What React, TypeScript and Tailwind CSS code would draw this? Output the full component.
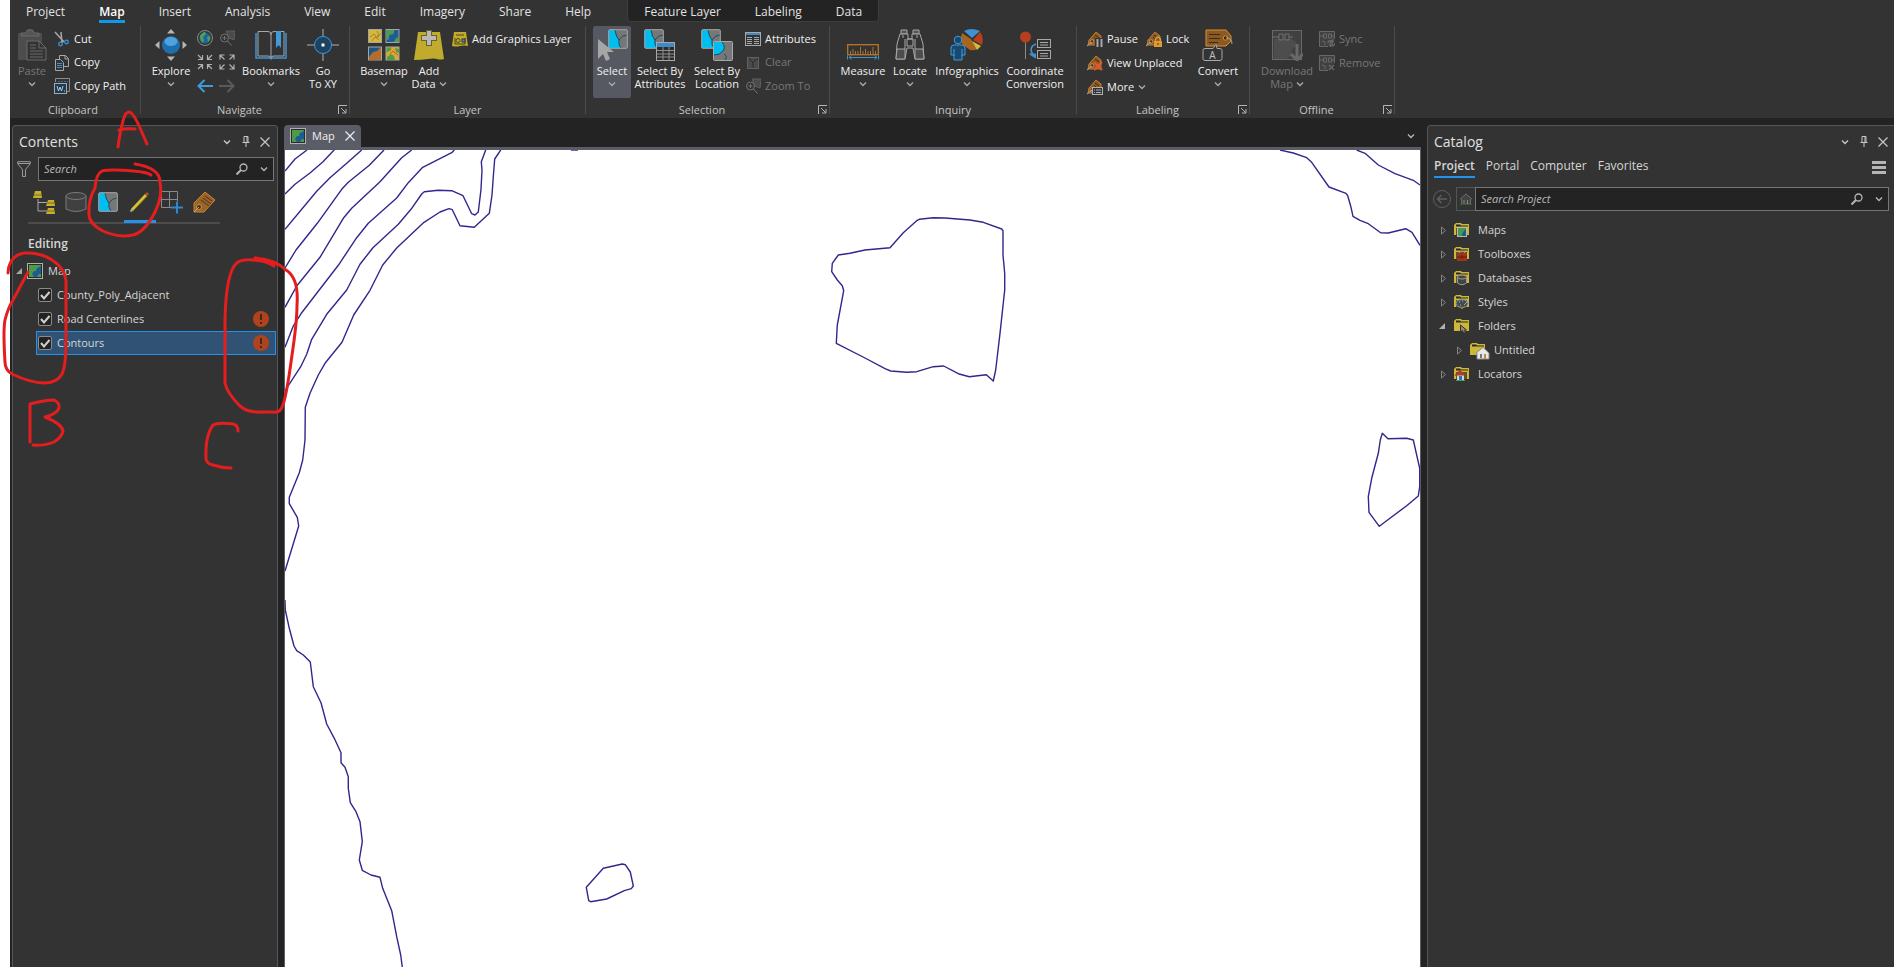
import { ReactNode, useState } from 'react';
import { clsx } from 'clsx';

const Chevron = ({ className }: { className?: string }) => (
  <svg viewBox="0 0 8 6" className={clsx('w-2 h-[6px] shrink-0', className)}>
    <path d="M1 1.5 4 4.5 7 1.5" fill="none" stroke="currentColor" strokeWidth="1.4" />
  </svg>
);

const Big = ({ children }: { children: ReactNode }) => (
  <svg viewBox="0 0 32 32" className="size-8 shrink-0" fill="none">
    {children}
  </svg>
);

const Small = ({ children }: { children: ReactNode }) => (
  <svg viewBox="0 0 16 16" className="size-4 shrink-0" fill="none">
    {children}
  </svg>
);

/* ---------- ribbon icons, 32px ---------- */

const PasteIcon = () => (
  <Big>
    <rect x="2" y="4" width="24" height="27" rx="1" fill="#4d4d4d" />
    <path d="M5 4h5a4 3.5 0 0 1 8 0h5v3H5z" fill="#555" stroke="#6b6b6b" />
    <path d="M11 12h12l7 7v12H11z" fill="#333" stroke="#6b6b6b" />
    <path d="M23 12v7h7M14 16h6M14 19h6M14 22h13M14 25h13M14 28h13" stroke="#6b6b6b" />
  </Big>
);

const ExploreIcon = () => (
  <Big>
    <path d="M16 0l4 4.500h-8zM16 32l4-4.500h-8zM0 16l4.500-4v8zM32 16l-4.500-4v8z" fill="#b5b5b5" />
    <circle cx="16" cy="16" r="9" fill="#1f6fae" />
    <ellipse cx="16" cy="12.5" rx="6.5" ry="4.5" fill="#4fa3dc" />
  </Big>
);

const BookmarksIcon = () => (
  <Big>
    <path d="M1 4v25h13q2 0 2 1.500Q16 29 18 29h13V4" stroke="#3f92d2" strokeWidth="1.5" />
    <path
      d="M3 2.500h10q3 0 3 3 0-3 3-3h10V27H19q-3 0-3 2 0-2-3-2H3zM16 5v23"
      stroke="#a8a8a8"
    />
    <path d="M21 2h5v17l-2.500-3-2.500 3z" fill="#3f9bdc" />
  </Big>
);

const GoToIcon = () => (
  <Big>
    <path d="M16 0v7M16 25v7M0 16h7M25 16h7" stroke="#b0b0b0" />
    <circle cx="16" cy="16" r="8.5" fill="#1d4361" stroke="#3b9ae0" />
    <path d="M14.500 14.500h3v3h-3z" fill="#fff" />
  </Big>
);

const BasemapIcon = () => (
  <Big>
    <rect x=".5" y=".5" width="13" height="13" fill="#d3b83b" stroke="#a5a5a5" />
    <path d="M2 8l4-3 3 4 4-5M4 12l3-4 4 3M9 2l2 4" stroke="#c27a2a" />
    <rect x="9" y="6" width="2" height="2" fill="#58a94c" />
    <rect x="18" y=".5" width="13" height="13" fill="#1d5c94" stroke="#a5a5a5" />
    <path d="M18.500 1h8l-1 4-4 1-1 5-2-1zM31 8v5h-5l2-4z" fill="#4d9a52" />
    <rect x=".5" y="18" width="13" height="13" fill="#1d5680" stroke="#a5a5a5" />
    <path d="M1 28l4-5 4-1 4-4v13H1z" fill="#b36d31" />
    <rect x="18" y="18" width="13" height="13" fill="#dba730" stroke="#a5a5a5" />
    <path d="M18.500 18.500h5l-1 3-4 2zM27 19l4 1v4l-3-1zM19 28l4-3 3 2 1 4h-8z" fill="#4f9d46" />
    <path d="M22 25l3-3 2 2 3 2" stroke="#cb5a2c" />
  </Big>
);

const AddDataIcon = () => (
  <Big>
    <path d="M5 3h22l4 27q-4 1-7 0t-9 0-14 1z" fill="#c1ab2d" />
    <path d="M16 1v16M8 9h16" stroke="#6b6223" strokeWidth="6" />
    <path d="M16 2v14M9 9h14" stroke="#b9b9b9" strokeWidth="4" />
  </Big>
);

const LayerTile = ({ x, y, s = 20 }: { x: number; y: number; s?: number }) => (
  <svg x={x} y={y} width={s} height={s} viewBox="0 0 20 20">
    <rect x=".7" y=".7" width="18.6" height="18.6" rx="1" fill="#777" />
    <path d="M1 1h6q1 7 4 10-1 5 2 8H1z" fill="#00bff0" />
    <path d="M7 1q1 7 4 10-1 5 2 8M11 11q3-5 8-5" stroke="#174f60" fill="none" />
    <rect x=".7" y=".7" width="18.6" height="18.6" rx="1" stroke="#a8a8a8" fill="none" />
  </svg>
);

const SelectIcon = () => (
  <Big>
    <LayerTile x={12} y={0} />
    <path d="M2 10v20l5-5 3 7 4-2-3-7h7z" fill="#a6a6a6" />
  </Big>
);

const SelectAttributesIcon = () => (
  <Big>
    <LayerTile x={0} y={0} />
    <rect x="12.5" y="13.5" width="18" height="18" fill="#2c2c2c" stroke="#a8a8a8" />
    <path d="M13 14h17v4H13z" fill="#3a8bc6" />
    <path d="M13 21.500h17M13 25h17M13 28h17M19 18v13M25 18v13" stroke="#8f8f8f" />
  </Big>
);

const SelectLocationIcon = () => (
  <Big>
    <LayerTile x={0} y={0} />
    <rect x="12.5" y="12.5" width="19" height="19" rx="1" fill="#777" stroke="#a8a8a8" />
    <path d="M13 13h8q4 5 1 9-3 4-9 4z" fill="#00bff0" />
    <path d="M21 13q4 5 1 9-3 4-9 4M23 25q4 2 1 6" stroke="#174f60" />
  </Big>
);

const MeasureIcon = () => (
  <Big>
    <rect x=".7" y="15.7" width="30.6" height="10" stroke="#b0722b" strokeWidth="1.4" />
    <path
      d="M3.500 25v-3M6 25v-5M8.500 25v-3M11 25v-3M13.500 25v-7M16 25v-3M18.500 25v-5M21 25v-3M23.500 25v-3M26 25v-7M28.500 25v-3"
      stroke="#b0722b"
    />
    <path
      d="M.5 26.500v4M31.500 26.500v4M2 28.500h28M4.500 26.500l-2.500 2 2.500 2M27.500 26.500l2.500 2-2.500 2"
      stroke="#3f92d2"
    />
  </Big>
);

const LocateIcon = () => (
  <Big>
    <path d="M7 1h6v4H7zM19 1h6v4h-6z" fill="#555" stroke="#a8a8a8" />
    <path d="M6 5h8v5h4V5h8l3 10 1 15h-9l-2-11h-6l-2 11H2l1-15z" fill="#333" stroke="#a8a8a8" />
    <path d="M3 20h8v10H2zM21 20h8l1 10h-9z" fill="#4d4d4d" stroke="#a8a8a8" />
    <path d="M13 10h6v7h-6zM9 6v3M23 6v3M11 10v10M21 10v10" stroke="#a8a8a8" />
  </Big>
);

const InfographicsIcon = () => (
  <svg viewBox="0 0 34 32" className="w-[34px] h-8 shrink-0" fill="none">
    <path d="M21 10L12 4q-2 6 0 11l8 6q4 1 7-1z" fill="#a8651f" />
    <path d="M22 9l-8-7q7-4 16 0z" fill="#3f92d2" />
    <path d="M23 11l7-8q4 5 2 13z" fill="#b5401f" />
    <path d="M22 12l9 5-4 4z" fill="#d2bd35" />
    <circle cx="8" cy="11" r="3.8" fill="#184a70" stroke="#3f9bdc" />
    <path d="M4 16h8q3 0 3 3v7h-3v5H4v-5H1v-7q0-3 3-3z" fill="#184a70" stroke="#3f9bdc" />
    <path d="M4 20v7M12 20v7" stroke="#3f9bdc" />
  </svg>
);

const CoordinateIcon = () => (
  <Big>
    <path d="M6.500 8v22" stroke="#8b8b8b" />
    <circle cx="6.5" cy="8" r="5.5" fill="#b5401f" />
    <rect x="18.5" y="10.5" width="13" height="8" stroke="#a8a8a8" />
    <rect x="18.5" y="21.5" width="13" height="8" stroke="#a8a8a8" />
    <path d="M21 13.500h8M21 16h8M21 24.500h8M21 27h8" stroke="#a8a8a8" />
    <path d="M17 15q-8 3-3 11" stroke="#3f92d2" strokeWidth="1.5" />
    <path d="M10.500 25h6v4z" fill="#3f92d2" stroke="#3f92d2" />
  </Big>
);

const ConvertIcon = () => (
  <Big>
    <path d="M4 1h20l5 6v5l-5 5H4z" fill="#8b5a22" stroke="#d98f35" />
    <path d="M7 5.500h11M7 9.500h11M7 13.500h9" stroke="#3a2a18" />
    <circle cx="23.5" cy="9" r="2.2" fill="#3a2a18" stroke="#d98f35" />
    <path d="M24 9q6 0 6 6" stroke="#a8a8a8" />
    <path
      d="M3 19.500h8l3-4 1 4h3q2 0 2 2v8q0 2-2 2H3q-2 0-2-2v-8q0-2 2-2z"
      fill="#333"
      stroke="#a8a8a8"
    />
    <text x="10.5" y="29.5" textAnchor="middle" fontSize="10" fill="#c4c4c4">
      A
    </text>
  </Big>
);

const DownloadMapIcon = () => (
  <Big>
    <rect x="1.5" y="1.5" width="29" height="29" fill="#404040" stroke="#686868" />
    <path d="M3 10h18l4 3v4l-4 3-1 7-5 3H3z" fill="#4d4d4d" />
    <path d="M1 8h7M8 5v6h4V5zM14 5v6h4V5zM18 8h4" stroke="#707070" />
    <path d="M26 15v14M20 25l6 6 6-6" stroke="#686868" strokeWidth="3" />
  </Big>
);

/* ---------- ribbon icons, 16px ---------- */

const CutIcon = () => (
  <Small>
    <path d="M1 1l9 10M7 1l1 11" stroke="#a8a8a8" strokeWidth="1.5" />
    <circle cx="6.5" cy="13" r="1.8" stroke="#3f92d2" strokeWidth="1.3" />
    <circle cx="12.5" cy="11" r="1.8" stroke="#3f92d2" strokeWidth="1.3" />
  </Small>
);

const CopyIcon = () => (
  <Small>
    <path d="M5.500.5h6l3 3v8h-9z" fill="#333" stroke="#a8a8a8" />
    <path d="M11 1v3h3" stroke="#a8a8a8" />
    <path d="M1.500 4.500h5l3 3v8h-8z" fill="#333" stroke="#a8a8a8" />
    <path d="M3 8.500h5M3 10.500h5M3 12.500h5" stroke="#3f92d2" />
  </Small>
);

const CopyPathIcon = () => (
  <Small>
    <path d="M1.500 4V.5h14v13H13" stroke="#8b8b8b" />
    <path d="M4 3.500h10" stroke="#2c6ea3" strokeDasharray="2 1" />
    <rect x=".5" y="5.500" width="12" height="10" fill="#173d5a" stroke="#a8a8a8" />
    <path d="M3 8l1.500 5L6 9l1.500 4L9 8M10 13h1" stroke="#c4c4c4" />
  </Small>
);

const GlobeIcon = () => (
  <Small>
    <circle cx="8" cy="8" r="7.5" stroke="#8b8b8b" />
    <circle cx="8" cy="8" r="5.600" fill="#1e639e" />
    <path d="M3 6q2-4 5-4l1 2-3 3 1 3-1 3q-3-2-3-7zM10 7l3-1q1 4-2 6z" fill="#4f9f58" />
  </Small>
);

const ZoomSelectionIcon = () => (
  <Small>
    <path d="M7 1h9l-1 9-5-2z" fill="#4b4b4b" stroke="#5f5f5f" />
    <circle cx="5.5" cy="8" r="4" fill="#333" stroke="#727272" />
    <path d="M8.500 11l4 4.500M3.500 8h4M5.500 6v4" stroke="#727272" />
  </Small>
);

const ShrinkIcon = () => (
  <Small>
    <path
      d="M1 1l4 4M5.500 1v4.500H1M15 1l-4 4M10.500 1v4.500H15M1 15l4-4M5.500 15v-4.500H1M15 15l-4-4M10.500 15v-4.500H15"
      stroke="#b0b0b0"
      strokeWidth="1.2"
    />
  </Small>
);

const GrowIcon = () => (
  <Small>
    <path
      d="M1 1l4.500 4.500M1 5.500V1h4.500M15 1l-4.500 4.500M15 5.500V1h-4.500M1 15l4.500-4.500M1 10.500V15h4.500M15 15l-4.500-4.500M15 10.500V15h-4.500"
      stroke="#b0b0b0"
      strokeWidth="1.2"
    />
  </Small>
);

const ArrowIcon = ({ forward }: { forward?: boolean }) => (
  <Small>
    <path
      d={forward ? 'M0 8h14M8.500 2l6 6-6 6' : 'M16 8H2M7.500 2l-6 6 6 6'}
      stroke={forward ? '#5a5a5a' : '#3f9bdc'}
      strokeWidth="2"
    />
  </Small>
);

const GraphicsLayerIcon = () => (
  <Small>
    <path d="M2 1h12l2 14q-4-1-8 0t-8 0z" fill="#c1ab2d" />
    <path d="M4 4h8M3 7v6h10V7" stroke="#4d451c" />
    <circle cx="6" cy="9.5" r="2" stroke="#4d451c" />
    <rect x="10" y="8" width="3" height="3" fill="#3f92d2" stroke="#333" />
  </Small>
);

const TableIcon = () => (
  <Small>
    <rect x=".5" y="1.5" width="15" height="13" stroke="#a8a8a8" />
    <path d="M1 2h14v2H1z" fill="#3a8bc6" />
    <path
      d="M2 6.500h5M2 8.500h5M2 10.500h5M2 12.500h5M9 6.500h5M9 8.500h5M9 10.500h5M9 12.500h5"
      stroke="#a8a8a8"
    />
  </Small>
);

const ClearIcon = () => (
  <Small>
    <rect x="2.5" y="2.5" width="11" height="11" fill="#4b4b4b" stroke="#616161" />
    <path d="M4 3l4 5v5M8 8q2-4 5-4" stroke="#2c2c2c" />
  </Small>
);

const TagIcon = ({ badge }: { badge: 'pause' | 'lock' | 'unplaced' | 'more' }) => (
  <Small>
    <path d="M2 9L9 1l5 4v9H1z" fill="#8f5c24" stroke="#c07e30" />
    <circle cx="5" cy="10.5" r="1.8" fill="#333" stroke="#d98f35" />
    <path d="M8 4l4 3M7 6l3 3" stroke="#3a2a18" />
    <path d="M0 15l5-4" stroke="#a8a8a8" />
    {badge === 'pause' && (
      <>
        <path d="M8 7h8v9H8z" fill="#333" />
        <path d="M10.500 8v8M14.500 8v8" stroke="#a8a8a8" strokeWidth="2" />
      </>
    )}
    {badge === 'lock' && (
      <>
        <path d="M9.500 10V8q2.500-4 5 0v2" stroke="#d9a040" strokeWidth="1.3" />
        <path d="M8 10h8v6H8z" fill="#e09a33" />
        <path d="M12 12v2" stroke="#333" />
      </>
    )}
    {badge === 'unplaced' && <path d="M7 7l8 8M15 7l-8 8" stroke="#e8562c" strokeWidth="2" />}
    {badge === 'more' && (
      <>
        <rect x="5.5" y="8.5" width="10" height="7" fill="#333" stroke="#b0b0b0" />
        <path d="M7 11h1M7 13.500h1M9 11h5M9 13.500h5" stroke="#b0b0b0" />
      </>
    )}
  </Small>
);

const OfflineIcon = ({ remove }: { remove?: boolean }) => (
  <Small>
    <path d="M15.500 8V.5H.5v15H9" fill="#414141" stroke="#686868" />
    <path d="M0 5h4M4.500 3v4h3V3zM9.500 3v4h3V3zM12 5h3M3 10l3 1v3" stroke="#686868" />
    <path
      d={remove ? 'M10 10l5 5M15 10l-5 5' : 'M9 12q0-3 5-2M14 8v3h-3M16 12q0 3-5 3M11 16v-3h3'}
      stroke="#686868"
      strokeWidth="1.4"
    />
  </Small>
);

/* ---------- pane icons ---------- */

const MapIcon = () => (
  <Small>
    <rect x=".5" y=".5" width="15" height="15" fill="#1d5c94" stroke="#b0b0b0" />
    <path d="M2 2h12v1l-4 2-1 3H7l-2 3 2 3H2zM12 11h2v3h-4z" fill="#4d9a48" />
    <rect x="1.5" y="1.5" width="13" height="13" stroke="#2b2b2b" />
  </Small>
);

const SearchIcon = () => (
  <svg viewBox="0 0 12 12" className="size-3 shrink-0" fill="none">
    <circle cx="7.5" cy="4.5" r="3.5" stroke="#b5b5b5" strokeWidth="1.3" />
    <path d="M5 7L.5 11.500" stroke="#b5b5b5" strokeWidth="2" />
  </svg>
);

const FolderBadge = ({ kind }: { kind: string }) => {
  switch (kind) {
    case 'Maps':
      return (
        <>
          <rect x="3.5" y="5.5" width="9" height="9" fill="#4a9a4c" stroke="#b8b8b8" />
          <path d="M8 14q0-4 4-7v7z" fill="#1d5c94" />
        </>
      );
    case 'Toolboxes':
      return (
        <>
          <path d="M5.500 8V5.500h5V8" stroke="#9a9a9a" />
          <path d="M3 7h10v8H3z" fill="#a33216" />
          <path d="M3 11h10M8 9v4" stroke="#5c2315" />
        </>
      );
    case 'Databases':
      return (
        <>
          <path d="M3.500 7v6q4.500 3.500 9 0V7" fill="#444" stroke="#9b9b9b" />
          <ellipse cx="8" cy="7" rx="4.5" ry="2" fill="#444" stroke="#9b9b9b" />
        </>
      );
    case 'Styles':
      return (
        <>
          <ellipse cx="8" cy="9.5" rx="6" ry="4" fill="#4a4a4a" stroke="#8f9da5" />
          <path d="M5 8h1M8 7h1" stroke="#3f92d2" strokeWidth="2" />
          <path d="M6 11h1" stroke="#4a9a4c" strokeWidth="2" />
          <path d="M10 11l5-5" stroke="#a8a8a8" />
          <path d="M8 13v2" stroke="#c06a2c" strokeWidth="2" />
        </>
      );
    case 'Folders':
      return <path d="M6.500 7v7l2-1.500 1 2.500h2l-1-3h2z" fill="#8b8b8b" stroke="#333" />;
    case 'Locators':
      return (
        <>
          <path d="M3 9h7v5H3z" fill="#cfd6d9" />
          <path d="M0 9.500L6 4l6 5.500z" fill="#b8391b" />
          <path d="M5 10h3v4H5z" fill="#2a76b2" />
          <path d="M2 14.500h9" stroke="#44a04b" />
        </>
      );
    default:
      return (
        <>
          <path d="M6 11l7-5.500 6 5.500v6H7v-6z" fill="#e8e8e8" stroke="#8b8b8b" />
          <path d="M10 12h2v4h-2z" fill="#777" />
          <path d="M14 12h2v5h-2z" fill="#c98a45" />
        </>
      );
  }
};

const FolderIcon = ({ kind }: { kind: string }) => (
  <svg viewBox="0 0 16 16" className="size-4 shrink-0 overflow-visible" fill="none">
    <path d="M0 3L2 1h5l1 1h7v11H0z" fill="#cdb736" />
    <path d="M2 2.500h4l1 1h7v1H2z" fill="#2b2b2b" />
    {!['Folders', 'Untitled'].includes(kind) && (
      <path d="M2 6h11v8H2z" fill="#333" opacity=".75" />
    )}
    <FolderBadge kind={kind} />
  </svg>
);

const WarningIcon = () => (
  <Small>
    <circle cx="8" cy="8" r="8" fill="#b0421d" />
    <path d="M8 3v6M8 11v2" stroke="#3a2a24" strokeWidth="2" />
  </Small>
);

const CloseGlyph = () => (
  <svg viewBox="0 0 10 10" className="size-[10px]" fill="none" stroke="currentColor">
    <path d="M.5.5l9 9M9.500.5l-9 9" strokeWidth="1.2" />
  </svg>
);

const PaneControls = () => (
  <div className="flex items-center gap-[3px] text-[#c8c8c8]">
    <button aria-label="Pane menu" className="w-4 flex justify-center">
      <Chevron />
    </button>
    <button aria-label="Pin pane" className="w-4 flex justify-center">
      <svg viewBox="0 0 8 11" className="w-2 h-[11px]" fill="none" stroke="currentColor">
        <path d="M2 6V.5h4V6M.5 6.500h7M4 7v4M5 1v5" />
      </svg>
    </button>
    <button aria-label="Close pane" className="w-4 flex justify-center">
      <CloseGlyph />
    </button>
  </div>
);

/* ---------- ribbon ---------- */

const LargeButton = ({
  icon,
  lines,
  menu,
  active,
  disabled,
  className,
}: {
  icon: ReactNode;
  lines: string[];
  menu?: boolean;
  active?: boolean;
  disabled?: boolean;
  className: string;
}) => (
  <button
    disabled={disabled}
    className={clsx(
      'flex flex-col items-center h-[72px] pt-[3px] shrink-0 rounded-xs',
      active && 'bg-[#565962]',
      disabled ? 'text-[#777]' : 'text-[#f0f0f0]',
      className
    )}
  >
    {icon}
    <span className="mt-[3px] leading-[13px] whitespace-nowrap">{lines[0]}</span>
    {lines[1] ? (
      <span className="flex items-center gap-[3px] leading-[13px] whitespace-nowrap">
        {lines[1]}
        {menu && <Chevron className="text-[#a8a8a8]" />}
      </span>
    ) : (
      menu && <Chevron className="mt-1 text-[#a8a8a8]" />
    )}
  </button>
);

const SmallButton = ({
  icon,
  label,
  menu,
  disabled,
}: {
  icon: ReactNode;
  label: string;
  menu?: boolean;
  disabled?: boolean;
}) => (
  <button
    disabled={disabled}
    className={clsx(
      'flex items-center gap-1 h-6 whitespace-nowrap',
      disabled ? 'text-[#777]' : 'text-[#f0f0f0]'
    )}
  >
    {icon}
    <span>{label}</span>
    {menu && <Chevron className="text-[#a8a8a8]" />}
  </button>
);

const Column = ({ children }: { children: ReactNode }) => (
  <div className="flex flex-col items-start pt-px">{children}</div>
);

const Group = ({
  title,
  launcher,
  className,
  children,
}: {
  title: string;
  launcher?: boolean;
  className: string;
  children: ReactNode;
}) => (
  <section className={clsx('shrink-0 border-r border-[#4b4b4b]', className)}>
    <div className="flex h-[72px]">{children}</div>
    <div className="flex items-end h-4">
      <h2 className="flex-1 h-4 leading-6 text-center text-[#c4c4c4]">{title}</h2>
      {launcher && (
        <button aria-label={`${title} options`} className="size-[9px] mr-[2px]">
          <svg viewBox="0 0 9 9" className="size-[9px]" fill="none" stroke="#b5b5b5">
            <path d="M.5 9V.5H9M3 3l4.500 4.500M8 4v4H4" />
          </svg>
        </button>
      )}
    </div>
  </section>
);

const TABS = ['Project', 'Map', 'Insert', 'Analysis', 'View', 'Edit', 'Imagery', 'Share', 'Help'];
const CONTEXT_TABS = ['Feature Layer', 'Labeling', 'Data'];

const RibbonTabs = () => {
  const [tab, setTab] = useState('Map');

  const renderTab = (name: string) => (
    <button
      key={name}
      onClick={() => setTab(name)}
      className={clsx(
        'h-[23px] pt-[3px] leading-[17px] text-xs border-b-[3px] whitespace-nowrap',
        tab === name ? 'border-[#0c99ee] font-semibold text-white' : 'border-transparent'
      )}
    >
      {name}
    </button>
  );

  return (
    <nav className="flex items-start h-[26px] pl-4 text-[#e2e2e2]">
      <div className="flex gap-[34px]">{TABS.map(renderTab)}</div>
      <div className="flex gap-[34px] h-[22px] ml-9 px-4 rounded-b-sm bg-[#232323] border-x border-b border-[#3d3d3d]">
        {CONTEXT_TABS.map(renderTab)}
      </div>
    </nav>
  );
};

const Ribbon = () => (
  <header className="h-[118px] shrink-0 bg-[#333] text-[11px] overflow-hidden">
    <RibbonTabs />
    <div className="flex h-[88px]">
      <Group title="Clipboard" className="w-[131px] pl-2 pr-3">
        <LargeButton icon={<PasteIcon />} lines={['Paste']} menu disabled className="w-7 mr-2" />
        <Column>
          <SmallButton icon={<CutIcon />} label="Cut" />
          <SmallButton icon={<CopyIcon />} label="Copy" />
          <SmallButton icon={<CopyPathIcon />} label="Copy Path" />
        </Column>
      </Group>

      <Group title="Navigate" launcher className="w-[209px]">
        <LargeButton icon={<ExploreIcon />} lines={['Explore']} menu className="w-[46px] ml-[7px]" />
        <div className="grid grid-cols-2 gap-x-[6px] gap-y-2 h-[64px] mt-1 ml-[3px] mr-1">
          <button aria-label="Full extent">
            <GlobeIcon />
          </button>
          <button aria-label="Zoom to selection" disabled>
            <ZoomSelectionIcon />
          </button>
          <button aria-label="Fixed zoom in">
            <ShrinkIcon />
          </button>
          <button aria-label="Fixed zoom out">
            <GrowIcon />
          </button>
          <button aria-label="Previous extent">
            <ArrowIcon />
          </button>
          <button aria-label="Next extent" disabled>
            <ArrowIcon forward />
          </button>
        </div>
        <LargeButton icon={<BookmarksIcon />} lines={['Bookmarks']} menu className="w-[64px]" />
        <LargeButton icon={<GoToIcon />} lines={['Go', 'To XY']} className="w-10" />
      </Group>

      <Group title="Layer" className="w-[236px]">
        <LargeButton icon={<BasemapIcon />} lines={['Basemap']} menu className="w-[50px] ml-[9px]" />
        <LargeButton icon={<AddDataIcon />} lines={['Add', 'Data']} menu className="w-10 mr-[3px]" />
        <Column>
          <SmallButton icon={<GraphicsLayerIcon />} label="Add Graphics Layer" />
        </Column>
      </Group>

      <Group title="Selection" launcher className="w-[244px]">
        <LargeButton
          icon={<SelectIcon />}
          lines={['Select']}
          menu
          active
          className="w-[38px] ml-[7px]"
        />
        <LargeButton
          icon={<SelectAttributesIcon />}
          lines={['Select By', 'Attributes']}
          className="w-[58px]"
        />
        <LargeButton
          icon={<SelectLocationIcon />}
          lines={['Select By', 'Location']}
          className="w-[56px]"
        />
        <Column>
          <SmallButton icon={<TableIcon />} label="Attributes" />
          <SmallButton icon={<ClearIcon />} label="Clear" disabled />
          <SmallButton icon={<ZoomSelectionIcon />} label="Zoom To" disabled />
        </Column>
      </Group>

      <Group title="Inquiry" className="w-[247px]">
        <LargeButton icon={<MeasureIcon />} lines={['Measure']} menu className="w-[50px] ml-2" />
        <LargeButton icon={<LocateIcon />} lines={['Locate']} menu className="w-11" />
        <LargeButton icon={<InfographicsIcon />} lines={['Infographics']} menu className="w-[70px]" />
        <LargeButton
          icon={<CoordinateIcon />}
          lines={['Coordinate', 'Conversion']}
          className="w-[66px]"
        />
      </Group>

      <Group title="Labeling" launcher className="w-[173px]">
        <div className="ml-[10px]">
          <Column>
            <div className="flex gap-2">
              <SmallButton icon={<TagIcon badge="pause" />} label="Pause" />
              <SmallButton icon={<TagIcon badge="lock" />} label="Lock" />
            </div>
            <SmallButton icon={<TagIcon badge="unplaced" />} label="View Unplaced" />
            <SmallButton icon={<TagIcon badge="more" />} label="More" menu />
          </Column>
        </div>
        <LargeButton
          icon={<ConvertIcon />}
          lines={['Convert']}
          menu
          className="w-[46px] ml-auto mr-2"
        />
      </Group>

      <Group title="Offline" launcher className="w-[145px]">
        <LargeButton
          icon={<DownloadMapIcon />}
          lines={['Download', 'Map']}
          menu
          disabled
          className="w-[56px] ml-[9px] mr-1"
        />
        <Column>
          <SmallButton icon={<OfflineIcon />} label="Sync" disabled />
          <SmallButton icon={<OfflineIcon remove />} label="Remove" disabled />
        </Column>
      </Group>
    </div>
  </header>
);

/* ---------- contents pane ---------- */

const VIEWS = [
  {
    name: 'Drawing order',
    icon: (
      <>
        <path d="M5 8v12h9M5 11.500h9" stroke="#a8a8a8" />
        <path d="M2 0h6l1 7H0zM15 9h6l1 6h-9zM15 17h6l1 6h-9z" fill="#c9b02c" />
        <path d="M1 4h8M14 12h8M14 20h8" stroke="#7a6c22" />
      </>
    ),
  },
  {
    name: 'Data source',
    icon: (
      <>
        <path d="M1 5v13q10 5 20 0V5" fill="#404040" stroke="#7a7a7a" />
        <ellipse cx="11" cy="5" rx="10" ry="3.5" fill="#404040" stroke="#7a7a7a" />
      </>
    ),
  },
  { name: 'Selection', icon: <LayerTile x={1} y={1} /> },
  {
    name: 'Editing',
    icon: (
      <>
        <path d="M3 19L17 4" stroke="#d8c22f" strokeWidth="3" />
        <path d="M4.500 19.500L18 5.500" stroke="#6d6220" />
        <path d="M17 4l2-2" stroke="#b5502b" strokeWidth="3" />
        <path d="M1.500 20.500l2-2" stroke="#a8a8a8" strokeWidth="2" />
      </>
    ),
  },
  {
    name: 'Snapping',
    icon: (
      <>
        <path d="M.5.5h16v16H.5zM8.500 0v17M0 8.500h17" stroke="#8b8b8b" />
        <path d="M16 10v12M10 16h12" stroke="#333" strokeWidth="4" />
        <path d="M16 10.500v12M10 16.500h12" stroke="#2f87cf" strokeWidth="2" />
      </>
    ),
  },
  {
    name: 'Labeling',
    icon: (
      <>
        <path d="M1 12L12 1l10 8-11 12H1z" fill="#9a6428" stroke="#c98433" />
        <circle cx="6" cy="16" r="2.5" fill="#333" stroke="#d98f35" />
        <path d="M8 9l8 6M10 7l8 6M12 5l7 5" stroke="#4b331a" />
        <path d="M1 21l5-5" stroke="#a8a8a8" />
      </>
    ),
  },
];

const LAYERS = [
  { name: 'County_Poly_Adjacent', warning: false },
  { name: 'Road Centerlines', warning: true },
  { name: 'Contours', warning: true },
];

const ContentsPane = () => {
  const [view, setView] = useState('Editing');
  const [selected, setSelected] = useState('Contours');

  return (
    <aside className="w-[266px] shrink-0 bg-[#333] border border-b-0 border-[#54565e] rounded-t-sm text-[#d6d6d6]">
      <div className="flex items-center justify-between h-[31px] pl-[6px] pr-1">
        <h2 className="text-sm text-[#e0e0e0]">Contents</h2>
        <PaneControls />
      </div>

      <div className="flex items-center gap-[7px] pl-1 pr-[3px]">
        <button aria-label="Filter">
          <svg viewBox="0 0 14 16" className="w-[14px] h-4" fill="none" stroke="#9b9b9b">
            <path d="M.7.7h12.600v2L8.500 8.500v7h-3v-7L.7 2.700z" />
            <path d="M1 2.500h12" />
          </svg>
        </button>
        <div className="flex flex-1 items-center gap-3 h-6 px-[5px] bg-[#232323] border border-[#767676]">
          <input
            aria-label="Search contents"
            placeholder="Search"
            className="flex-1 min-w-0 text-[11px] italic outline-none placeholder:text-[#b8b8b8]"
          />
          <SearchIcon />
          <Chevron className="text-[#b5b5b5]" />
        </div>
      </div>

      <div className="flex w-[192px] ml-[15px] mt-2 border-b-2 border-[#4c4c4c]">
        {VIEWS.map(({ name, icon }) => (
          <button
            key={name}
            aria-label={name}
            onClick={() => setView(name)}
            className={clsx(
              'flex justify-center w-8 h-[34px] pt-[2px] -mb-px border-b-[3px]',
              view === name ? 'border-[#2492ea]' : 'border-transparent'
            )}
          >
            <svg viewBox="0 0 23 23" className="size-[23px]" fill="none">
              {icon}
            </svg>
          </button>
        ))}
      </div>

      <h3 className="ml-[15px] mt-2 leading-6 text-xs font-semibold">{view}</h3>

      <div className="flex items-center gap-[5px] h-6 mt-[3px] pl-[3px] text-[11px]">
        <svg viewBox="0 0 6 6" className="size-[6px]">
          <path d="M6 0v6H0z" fill="#a8a8a8" />
        </svg>
        <MapIcon />
        <span>Map</span>
      </div>
      <ul className="pl-[23px] pr-px text-[11px]">
        {LAYERS.map(({ name, warning }) => (
          <li
            key={name}
            onClick={() => setSelected(name)}
            className={clsx(
              'flex items-center justify-between h-6 pl-px pr-[6px] border',
              selected === name ? 'bg-[#2f5275] border-[#2492ea]' : 'border-transparent'
            )}
          >
            <label className="flex items-center gap-[5px]">
              <span className="relative size-[14px]">
                <input
                  type="checkbox"
                  defaultChecked
                  className="peer block appearance-none size-[14px] rounded-xs bg-[#232323] border border-[#8b8b8b]"
                />
                <svg
                  viewBox="0 0 14 14"
                  className="absolute inset-0 size-[14px] hidden peer-checked:block pointer-events-none"
                >
                  <path d="M3 7l3 3.500L11.500 4" fill="none" stroke="#d0d0d0" strokeWidth="2" />
                </svg>
              </span>
              {name}
            </label>
            {warning && <WarningIcon />}
          </li>
        ))}
      </ul>
    </aside>
  );
};

/* ---------- map view ---------- */

const CONTOURS = [
  'M285 171L295 159L307 150',
  'M285 194L295 184.300L310 173L323 161.700L335 149',
  'M285 229.300L316.700 191.300L330 177.700L346.700 163.300L361.700 150',
  'M285 268L296 250L317.300 223.300L341.700 189.300L348.300 182.300L369.300 165.300L384 150',
  'M285 307.300L296.700 286L320 257.300L343.300 218.300L351.700 208.300L380 181.700L401.700 157.700L411.700 150',
  'M285 347.300L293.300 326L301.700 312.700L338.300 265.300L356.700 237.700L368.300 223.300L396.700 198L408.300 182.700L422.700 167.300L451.700 152.700L454.300 150',
  'M285 390.700L300.700 366.700L306.700 354.300L311.700 339.300L326.700 314.300L346.700 290L360 264.300L372.700 248L398.300 224.300L411 209.300L421.700 194L424.300 191.700L438.300 190.300L451.700 190.700L463 195.700L471.700 213.700L475 215L478.300 212L481 189.300L482 170L481.300 161.700L485.700 150',
  'M500.700 150L494.700 159L493.300 176.700L492 195L489.300 213.300L474.300 227.300L460 225.700L452.300 209.700L449 208.700L440 212L424 222.300L396.700 248L382.700 265L370 290.300L353.700 315L342 342.300L325 363.300L318.300 375L310 393.300L305.300 407.300L305 440L302.700 460L299.300 472.700L289.300 497.300V503.700L297.300 517.300L298.700 526L285 571',
  'M285 600L285.300 610L289.300 628.300L294 646L296.700 650.700L303.300 655L310.300 662L313.300 686.700L321 702.700L326.700 724L334.300 738.300L341 752.700V762.700L345 767.300L348.300 776.700V788.300L350.300 802.700L356 811.700L360 821.700L362.300 841.700L359.300 860L362.300 870.300L371 875L380 877.300L382.700 888.300L391.700 910.700L396.700 936.700L400.700 955L402.300 967',
  'M586.300 887.300L603.300 868.300L622.300 864L625.300 864.700L630.300 872L633.300 886L631.300 888.700L624.300 890.700L606.700 899L590.700 901.700L588.700 900.700Z',
  'M838.300 255L850 253.300L865 250L890 247.700L903.300 232.700L916.700 220.700L919.300 219.300L933.300 217.700L945 218L970 220L983.300 222.300L1001.700 229L1003 230.700V255L1004.700 273.300V290L1000 333.300L995.700 370L993.300 381L986.300 374.700L969.300 376.700L958.300 373.700L943.700 366L933.300 366.700L916.700 371.700L906.700 372.300L890.700 371L885 368.700L865 358L836.300 343.300L837.300 325L843.700 290.700L842.300 285.700L837.300 280L831.700 271.700L832.300 263.300Z',
  'M1280 150L1293.300 153L1306.700 157.700L1311.700 162.300L1329 187L1346 193.300L1347.700 195.700L1351 207.300L1353 216.300L1360 220.300L1368.300 223.700L1380.700 232.700L1388.300 233L1405.700 228.700L1412 232.300L1420 245.300',
  'M1356.700 150L1365 153.300L1378.300 165L1395 173.700L1414 180.700L1420 185',
  'M1382.300 433.300L1388 438.700L1406.700 438.300L1413.300 440L1419.700 468.300V486.700L1418.300 496L1406.700 505.700L1379.300 526.300L1369 512.300L1368.300 496.700L1371.700 478.300L1378.300 453.300L1380.300 440Z',
  'M571 150H578',
];

const MapView = () => (
  <main className="flex flex-col flex-1 min-w-0">
    <div className="flex items-center justify-between h-[22px] pr-[6px]">
      <div className="flex items-center gap-[6px] h-full px-[6px] bg-[#5b5d66] rounded-t-sm text-[#f0f0f0]">
        <MapIcon />
        <span className="text-[11px]">Map</span>
        <button aria-label="Close map" className="ml-1">
          <CloseGlyph />
        </button>
      </div>
      <button aria-label="Open views" className="text-[#b5b5b5]">
        <Chevron />
      </button>
    </div>
    <div className="flex-1 min-h-0 bg-white border-x border-t-[3px] border-[#5b5d66]">
      <svg
        viewBox="285 150 1135 817"
        preserveAspectRatio="xMinYMin slice"
        className="block size-full"
        fill="none"
        stroke="#30288c"
        strokeWidth="1.4"
        strokeLinejoin="round"
      >
        {CONTOURS.map((d) => (
          <path key={d} d={d} />
        ))}
      </svg>
    </div>
  </main>
);

/* ---------- catalog pane ---------- */

const CATALOG_TABS = ['Project', 'Portal', 'Computer', 'Favorites'];

const CATALOG = [
  { name: 'Maps' },
  { name: 'Toolboxes' },
  { name: 'Databases' },
  { name: 'Styles' },
  { name: 'Folders', open: true },
  { name: 'Untitled', nested: true },
  { name: 'Locators' },
];

const CatalogPane = () => {
  const [tab, setTab] = useState('Project');

  return (
    <aside className="w-[467px] shrink-0 bg-[#333] border-l border-t border-[#54565e] rounded-tl-sm text-[#d6d6d6]">
      <div className="flex items-center justify-between h-[31px] pl-[6px] pr-[3px]">
        <h2 className="text-sm text-[#e0e0e0]">Catalog</h2>
        <PaneControls />
      </div>

      <div className="flex items-start justify-between h-[30px] pl-[6px] pr-2">
        <div className="flex gap-[11px]">
          {CATALOG_TABS.map((name) => (
            <button
              key={name}
              onClick={() => setTab(name)}
              className={clsx(
                'h-[21px] pb-[2px] leading-[17px] text-xs border-b-2',
                tab === name ? 'border-[#2492ea] font-semibold' : 'border-transparent'
              )}
            >
              {name}
            </button>
          ))}
        </div>
        <button aria-label="Menu" className="mt-1">
          <svg viewBox="0 0 14 13" className="w-[14px] h-[13px]">
            <path d="M0 0h14v3H0zM0 5h14v3H0zM0 10h14v3H0z" fill="#b5b5b5" />
          </svg>
        </button>
      </div>

      <div className="flex items-center px-[5px]">
        <button aria-label="Back" className="mr-[5px]" disabled>
          <svg viewBox="0 0 18 18" className="size-[18px]" fill="none" stroke="#5f5f5f">
            <circle cx="9" cy="9" r="8.5" />
            <path d="M14 9H5M8.500 5L4.500 9l4 4" strokeWidth="1.5" />
          </svg>
        </button>
        <button
          aria-label="Home"
          className="flex items-center justify-center w-[19px] h-6 border border-r-0 border-[#555]"
        >
          <svg viewBox="0 0 12 12" className="size-3" fill="none">
            <path d="M0 6l6-5 6 5M1.500 6v5h9V6" fill="#444" stroke="#6b6b6b" />
            <path d="M4 7v3M7.500 7v4" stroke="#8a8a8a" />
            <path d="M0 11.500h12" stroke="#315f35" />
          </svg>
        </button>
        <div className="flex flex-1 items-center gap-3 h-6 px-[5px] bg-[#232323] border border-[#767676]">
          <input
            aria-label="Search project"
            placeholder="Search Project"
            className="flex-1 min-w-0 text-[11px] italic outline-none placeholder:text-[#b8b8b8]"
          />
          <SearchIcon />
          <Chevron className="text-[#b5b5b5]" />
        </div>
      </div>

      <ul className="mt-[7px] pl-[11px] text-[11px]">
        {CATALOG.map(({ name, open, nested }) => (
          <li key={name} className={clsx('flex items-center h-6', nested && 'pl-4')}>
            <svg viewBox="0 0 7 9" className="w-[7px] h-[9px] mr-2">
              {open ? (
                <path d="M6 1v6H0z" fill="#b0b0b0" />
              ) : (
                <path d="M2.500 1v7L6.500 4.500z" fill="none" stroke="#858585" />
              )}
            </svg>
            <FolderIcon kind={name} />
            <span className="ml-2">{name}</span>
          </li>
        ))}
      </ul>
    </aside>
  );
};

/* ---------- pen markup over the window ---------- */

const Markup = () => (
  <svg
    viewBox="0 0 310 480"
    className="absolute left-0 top-0 w-[310px] h-[480px] pointer-events-none"
    fill="none"
    stroke="#e41e1e"
    strokeWidth="3"
    strokeLinecap="round"
    strokeLinejoin="round"
  >
    <path d="M118 147Q120 132 123 121Q125 112 129 112Q133 112 140 128L147 144M119 130Q126 128 135 129" />
    <path d="M135 164Q160 168 160 182Q163 196 155 212Q145 232 133 235Q118 238 103 231Q89 224 89 214Q88 200 95 188Q96 174 102 171Q110 169 133 171Q147 172 151 175" />
    <path d="M8 273Q9 255 25 253Q40 252 52 260Q65 268 66 281V340Q66 366 62 374Q57 383 44 383Q31 383 12 374Q5 370 5 362Q3 330 5 320Q8 308 13 300L28 272" />
    <path d="M30 442V404Q45 400 54 400Q60 403 59 408Q57 414 45 417Q62 424 63 431Q62 437 54 442Q45 446 33 445" />
    <path d="M274 266Q262 258 255 258Q276 260 286 270Q299 278 297 305Q297 322 292 355Q286 400 282 407Q280 413 273 412H262Q248 413 240 406Q227 393 225 383V320Q226 270 238 262Q244 258 262 261Q270 263 274 266" />
    <path d="M238 431Q238 425 233 424Q218 422 213 425Q205 436 206 459Q207 464 213 465Q222 468 231 468" />
  </svg>
);

function App() {
  return (
    <div className="relative h-dvh pl-[10px] bg-white overflow-hidden font-['Open_Sans','Noto_Sans',sans-serif]">
      <div className="flex flex-col h-full bg-[#232323]">
        <Ribbon />
        <div className="flex flex-1 min-h-0 gap-[6px] pt-[7px] pl-[2px]">
          <ContentsPane />
          <MapView />
          <CatalogPane />
        </div>
      </div>
      <Markup />
    </div>
  );
}

export default App;
